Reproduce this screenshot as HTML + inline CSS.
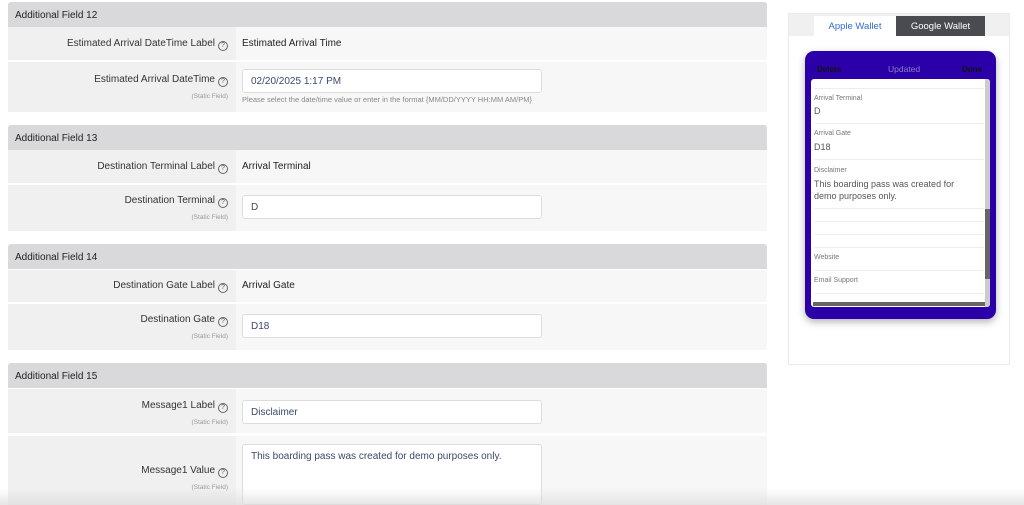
<!DOCTYPE html>
<html><head><meta charset="utf-8"><style>
*{box-sizing:border-box;margin:0;padding:0}
html,body{width:1024px;height:505px;overflow:hidden}
body{background:#fff;font-family:"Liberation Sans",sans-serif;position:relative;color:#333}
.a{position:absolute}
.hd{position:absolute;left:8px;width:759px;height:25px;background:#d9d9dc;font-size:10px;color:#222;padding:8px 0 0 7px;border-radius:3px 3px 0 0}
.row{position:absolute;left:8px;width:759px;background:#f7f7f7}
.lab{position:absolute;left:0;top:0;bottom:0;width:228px;background:#f0f0f0}
.lt{position:absolute;right:8px;font-size:10px;line-height:12px;color:#333;white-space:nowrap}
.q{display:inline-block;width:10px;height:10px;border:1px solid #666;border-radius:50%;font-size:7px;text-align:center;line-height:8px;margin-left:3px;vertical-align:-1px;color:#555}
.sf{position:absolute;right:8px;font-size:6.5px;color:#999}
.val{position:absolute;left:234px;font-size:10px;line-height:12px;color:#222}
.inp{position:absolute;left:234px;width:300px;height:24px;background:#fff;border:1px solid #ddd;border-radius:3px;font-size:10px;color:#3a4a6a;padding:6px 8px}
.pf{position:absolute;left:3px;font-size:7px;color:#777;white-space:nowrap}
.pv{position:absolute;left:3px;font-size:9px;color:#555}
.pl{position:absolute;left:3px;width:170px;height:1px;background:#eee}
</style></head><body>

<div class="hd" style="top:2px">Additional Field 12</div>
<div class="row" style="top:27px;height:33px"><div class="lab"><span class="lt" style="top:11px">Estimated Arrival DateTime Label<span class="q">?</span></span></div><span class="val" style="top:11px">Estimated Arrival Time</span></div>
<div class="row" style="top:62px;height:50px"><div class="lab"><span class="lt" style="top:12px">Estimated Arrival DateTime<span class="q">?</span></span><span class="sf" style="top:31px">(Static Field)</span></div><div class="inp" style="top:7px">02/20/2025 1:17 PM</div><span class="a" style="left:234px;top:33px;font-size:7.5px;color:#888;white-space:nowrap">Please select the date/time value or enter in the format {MM/DD/YYYY HH:MM AM/PM}</span></div>

<div class="hd" style="top:125px">Additional Field 13</div>
<div class="row" style="top:150px;height:33px"><div class="lab"><span class="lt" style="top:11px">Destination Terminal Label<span class="q">?</span></span></div><span class="val" style="top:11px">Arrival Terminal</span></div>
<div class="row" style="top:185px;height:46px"><div class="lab"><span class="lt" style="top:10px">Destination Terminal<span class="q">?</span></span><span class="sf" style="top:29px">(Static Field)</span></div><div class="inp" style="top:10px">D</div></div>

<div class="hd" style="top:244px">Additional Field 14</div>
<div class="row" style="top:270px;height:32px"><div class="lab"><span class="lt" style="top:10px">Destination Gate Label<span class="q">?</span></span></div><span class="val" style="top:10px">Arrival Gate</span></div>
<div class="row" style="top:304px;height:46px"><div class="lab"><span class="lt" style="top:10px">Destination Gate<span class="q">?</span></span><span class="sf" style="top:29px">(Static Field)</span></div><div class="inp" style="top:10px">D18</div></div>

<div class="hd" style="top:363px">Additional Field 15</div>
<div class="row" style="top:389px;height:44px"><div class="lab"><span class="lt" style="top:11px">Message1 Label<span class="q">?</span></span><span class="sf" style="top:30px">(Static Field)</span></div><div class="inp" style="top:11px">Disclaimer</div></div>
<div class="row" style="top:436px;height:69px"><div class="lab"><span class="lt" style="top:29px">Message1 Value<span class="q">?</span></span><span class="sf" style="top:48px">(Static Field)</span></div><div class="inp" style="top:8px;height:61px">This boarding pass was created for demo purposes only.</div></div>
<div class="a" style="left:0;top:488px;width:1024px;height:17px;background:linear-gradient(rgba(255,255,255,0),rgba(220,220,220,.7))"></div>

<div class="a" style="left:788px;top:13px;width:222px;height:352px;border:1px solid #eaeaea;background:#fff"></div>
<div class="a" style="left:789px;top:14px;width:220px;height:22px;background:#f0f0f0"></div>
<div class="a" style="left:814px;top:16px;width:82px;height:21px;background:#fff;color:#2f6fd1;font-size:9.5px;text-align:center;padding-top:5px">Apple Wallet</div>
<div class="a" style="left:896px;top:16px;width:89px;height:20px;background:#4a4b50;color:#fff;font-size:9.5px;text-align:center;padding-top:5px">Google Wallet</div>

<div class="a" style="left:805px;top:51px;width:191px;height:268px;background:#2c00a8;border-radius:9px;box-shadow:0 3px 8px rgba(0,0,0,.3)">
<span class="a" style="left:12px;top:14px;font-size:8px;font-weight:bold;color:#111">Delete</span>
<span class="a" style="left:83px;top:13px;font-size:8.5px;color:#8a7fc8">Updated</span>
<span class="a" style="right:14px;top:14px;font-size:8px;font-weight:bold;color:#111">Done</span>
<div class="a" style="left:6px;top:28px;width:179px;height:228px;background:#fff;border-radius:3px;overflow:hidden">
<div class="pl" style="top:9px"></div>
<span class="pf" style="top:16px">Arrival Terminal</span><span class="pv" style="top:27px">D</span>
<div class="pl" style="top:44px"></div>
<span class="pf" style="top:51px">Arrival Gate</span><span class="pv" style="top:63px">D18</span>
<div class="pl" style="top:80px"></div>
<span class="pf" style="top:88px">Disclaimer</span><span class="pv" style="top:99px;width:165px;line-height:12px">This boarding pass was created for demo purposes only.</span>
<div class="pl" style="top:129px"></div><div class="pl" style="top:142px"></div><div class="pl" style="top:155px"></div><div class="pl" style="top:168px"></div>
<span class="pf" style="top:175px">Website</span>
<div class="pl" style="top:191px"></div>
<span class="pf" style="top:198px">Email Support</span>
<div class="pl" style="top:214px"></div>
<div class="a" style="left:174px;top:0;width:5px;height:228px;background:#ccc"></div>
<div class="a" style="left:174px;top:130px;width:5px;height:70px;background:#666"></div>
<div class="a" style="left:2px;top:223px;width:172px;height:4px;background:#666"></div>
</div></div>
</body></html>
